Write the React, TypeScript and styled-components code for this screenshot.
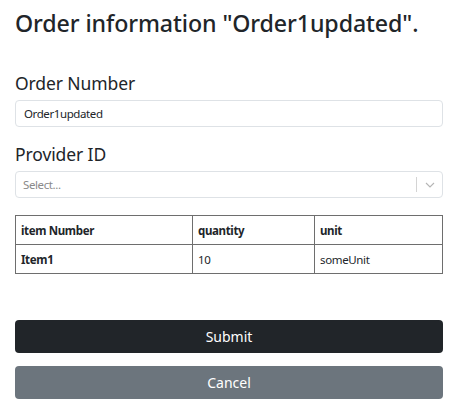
import React from "react";
import styled, { createGlobalStyle } from "styled-components";

const Global = createGlobalStyle`
  html, body { margin: 0; padding: 0; background: #fff; }
  body { font-family: "Noto Sans", "Open Sans", sans-serif; color: #212529; }
  * { box-sizing: border-box; }
`;

const Page = styled.div`
  width: 428px;
  margin-left: 15px;
  display: flex;
  flex-direction: column;
`;

const Title = styled.h1`
  margin: 6px 0 0;
  font-size: 23.2px;
  font-weight: 500;
  line-height: 34px;
  letter-spacing: -0.1px;
  white-space: nowrap;
`;

const Field = styled.div<{ $top: number }>`
  display: flex;
  flex-direction: column;
  margin-top: ${(p) => p.$top}px;
`;

const Label = styled.label`
  font-size: 17.5px;
  font-weight: 400;
  line-height: 26px;
  margin-bottom: 4px;
  letter-spacing: -0.1px;
`;

const TextInput = styled.div`
  height: 27px;
  border: 1px solid #dee2e6;
  border-radius: 4px;
  padding: 0 8px;
  display: flex;
  align-items: center;
  font-size: 11.5px;
  letter-spacing: -0.4px;
  color: #212529;
`;

const SelectBox = styled.div`
  height: 27px;
  border: 1px solid #dee2e6;
  border-radius: 4px;
  display: flex;
  align-items: center;
  font-size: 11.5px;
  letter-spacing: -0.4px;
  color: #8a8a8a;
`;

const Placeholder = styled.span`
  flex: 1;
  padding-left: 7px;
`;

const Separator = styled.span`
  width: 1px;
  height: 15px;
  background: #d4d4d4;
`;

const Indicator = styled.span`
  width: 25px;
  display: flex;
  justify-content: center;
  align-items: center;
`;

const Table = styled.table`
  margin-top: 17px;
  width: 100%;
  border-collapse: collapse;
  font-size: 11.5px;
  letter-spacing: -0.35px;
  color: #212529;
`;

const Th = styled.th<{ $w?: number }>`
  border: 1px solid #6e6e6e;
  height: 29px;
  padding: 0 5px;
  text-align: left;
  font-weight: 700;
  ${(p) => (p.$w ? `width: ${p.$w}px;` : "")}
`;

const Td = styled.td<{ $bold?: boolean }>`
  border: 1px solid #6e6e6e;
  height: 29px;
  padding: 0 5px;
  font-weight: ${(p) => (p.$bold ? 700 : 400)};
`;

const Button = styled.button<{ $variant: "dark" | "secondary"; $top: number }>`
  margin-top: ${(p) => p.$top}px;
  height: 33px;
  width: 100%;
  border: none;
  border-radius: 4px;
  font-family: inherit;
  font-size: 14px;
  color: #fff;
  background: ${(p) => (p.$variant === "dark" ? "#212529" : "#6c757d")};
`;

export default function App() {
  return (
    <>
      <Global />
      <Page>
        <Title>Order information "Order1updated".</Title>
        <Field $top={30}>
          <Label>Order Number</Label>
          <TextInput>Order1updated</TextInput>
        </Field>
        <Field $top={14}>
          <Label>Provider ID</Label>
          <SelectBox>
            <Placeholder>Select...</Placeholder>
            <Separator />
            <Indicator>
              <svg width="10" height="6" viewBox="0 0 10 6">
                <path d="M1 1 L5 5 L9 1" fill="none" stroke="#b5b5b5" strokeWidth="1.1" />
              </svg>
            </Indicator>
          </SelectBox>
        </Field>
        <Table>
          <thead>
            <tr>
              <Th $w={177}>item Number</Th>
              <Th $w={122}>quantity</Th>
              <Th>unit</Th>
            </tr>
          </thead>
          <tbody>
            <tr>
              <Td $bold>Item1</Td>
              <Td>10</Td>
              <Td>someUnit</Td>
            </tr>
          </tbody>
        </Table>
        <Button $variant="dark" $top={46}>Submit</Button>
        <Button $variant="secondary" $top={13}>Cancel</Button>
      </Page>
    </>
  );
}
